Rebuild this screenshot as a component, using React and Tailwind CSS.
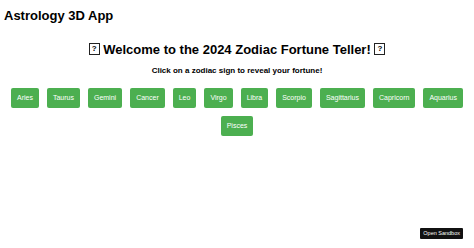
import React from 'react';

const signs = ['Aries', 'Taurus', 'Gemini', 'Cancer', 'Leo', 'Virgo', 'Libra', 'Scorpio', 'Sagittarius', 'Capricorn', 'Aquarius', 'Pisces'];

// missing-glyph box, as the emoji shows in the screenshot
function Tofu() {
    return (
        <span className="inline-block h-[12px] w-[11px] border border-[#222] text-center align-[3px] text-[8px] leading-[10px] font-bold">
            ?
        </span>
    );
}

export default function App() {
    return (
        <div className="relative h-[248px] w-[474px] bg-white text-black" style={{ fontFamily: '"Liberation Sans", Arial, sans-serif' }}>
            <h1 className="px-[4px] pt-[8px] text-[13px] font-bold leading-[16px]">Astrology 3D App</h1>
            <div className="text-center">
                <h2 className="mt-[18px] text-[13px] font-bold leading-[16px]">
                    <Tofu /> Welcome to the 2024 Zodiac Fortune Teller! <Tofu />
                </h2>
                <p className="mt-[8px] text-[8px] font-bold leading-[10px]">Click on a zodiac sign to reveal your fortune!</p>
                <div className="mt-[8px] flex flex-wrap justify-center px-[6px]">
                    {signs.map((s) => (
                        <button key={s} className="m-[4px] h-[20px] rounded-[2px] bg-[#4caf50] px-[6px] text-[7px] leading-[20px] text-white">
                            {s}
                        </button>
                    ))}
                </div>
            </div>
            <button className="absolute right-[11px] bottom-[9px] h-[11px] rounded-[1px] bg-[#111] px-[3px] text-[5.5px] leading-[11px] text-white">
                Open Sandbox
            </button>
        </div>
    );
}
